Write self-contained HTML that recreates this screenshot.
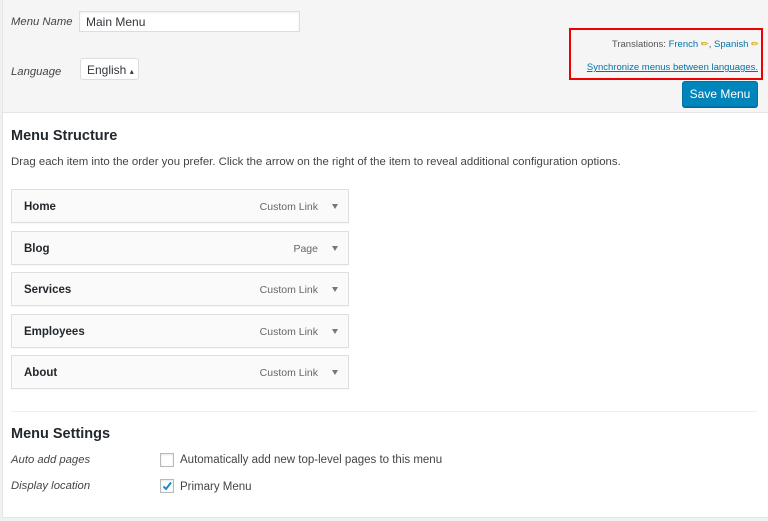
<!DOCTYPE html>
<html><head><style>
*{margin:0;padding:0;box-sizing:border-box}
body{width:768px;height:521px;background:#f1f1f1;font-family:"Liberation Sans",sans-serif;color:#23282d;position:relative;overflow:hidden;font-size:13px}
.frame{position:absolute;left:2px;top:0;width:768px;height:518px;background:#fff;border:1px solid #e5e5e5}
.head{position:absolute;left:3px;top:0;width:765px;height:113px;background:#f5f5f5;border-bottom:1px solid #e5e5e5}
.a{position:absolute;white-space:nowrap}
.lbl{font-style:italic;color:#444;font-size:11.3px}
.input{position:absolute;left:79px;top:11px;width:221px;height:21px;background:#fff;border:1px solid #ddd;box-shadow:inset 0 1px 2px rgba(0,0,0,.07);font-size:12px;padding:3px 6px;color:#32373c}
.sel{position:absolute;left:80px;top:58px;width:59px;height:22px;background:#fff;border:1px solid #ddd;border-radius:3px;font-size:12px;padding:4px 6px;color:#32373c;white-space:nowrap}
.red{position:absolute;left:569px;top:28px;width:194px;height:52px;border:2px solid #e00}
.btn{position:absolute;left:682px;top:81px;width:76px;height:26px;background:#0085ba;border:1px solid #0073aa;border-radius:3px;color:#fff;font-size:12px;text-align:center;line-height:24px;box-shadow:0 1px 0 #006799}
.item{position:absolute;left:11px;width:338px;height:34px;background:#fafafa;border:1px solid #dfdfdf;box-shadow:0 1px 1px rgba(0,0,0,.04)}
.item b{position:absolute;left:12px;top:11px;font-size:11.5px;color:#23282d}
.item span{position:absolute;right:30px;top:11px;font-size:10.5px;color:#666}
.item i{position:absolute;right:10px;top:14px;width:0;height:0;border-left:3.5px solid transparent;border-right:3.5px solid transparent;border-top:5px solid #777}
.cb{position:absolute;left:160px;width:14px;height:14px;border:1px solid #b4b9be;background:#fff;box-shadow:inset 0 1px 2px rgba(0,0,0,.1)}
a{color:#0073aa;text-decoration:none}
</style></head><body>
<div class="frame"></div>
<div class="head"></div>
<div class="a lbl" style="left:11px;top:16px">Menu Name</div>
<div class="input">Main Menu</div>
<div class="a lbl" style="left:11px;top:66px">Language</div>
<div class="sel">English <span style="font-size:8px">&#x25B4;</span></div>
<div class="red"></div>
<div class="a" style="right:9px;top:39px;font-size:9.5px;color:#555">Translations: <a>French</a> <span style="color:#c9a000">✏</span>, <a>Spanish</a> <span style="color:#c9a000">✏</span></div>
<div class="a" style="right:10px;top:62px;font-size:9.5px"><a style="text-decoration:underline">Synchronize menus between languages.</a></div>
<div class="btn">Save Menu</div>
<div class="a" style="left:11px;top:128px;font-size:14.5px;font-weight:bold;color:#23282d">Menu Structure</div>
<div class="a" style="left:11px;top:156px;font-size:11.4px;color:#444">Drag each item into the order you prefer. Click the arrow on the right of the item to reveal additional configuration options.</div>
<div class="item" style="top:189px"><b>Home</b><span>Custom Link</span><i></i></div>
<div class="item" style="top:231px"><b>Blog</b><span>Page</span><i></i></div>
<div class="item" style="top:272px"><b>Services</b><span>Custom Link</span><i></i></div>
<div class="item" style="top:314px"><b>Employees</b><span>Custom Link</span><i></i></div>
<div class="item" style="top:355px"><b>About</b><span>Custom Link</span><i></i></div>
<div class="a" style="left:11px;top:411px;width:746px;height:1px;background:#eee"></div>
<div class="a" style="left:11px;top:426px;font-size:14.5px;font-weight:bold;color:#23282d">Menu Settings</div>
<div class="a lbl" style="left:11px;top:454px">Auto add pages</div>
<div class="cb" style="top:453px"></div>
<div class="a" style="left:180px;top:454px;font-size:11.5px;color:#444">Automatically add new top-level pages to this menu</div>
<div class="a lbl" style="left:11px;top:480px">Display location</div>
<div class="cb" style="top:479px"><svg width="12" height="12" viewBox="0 0 12 12" style="position:absolute;left:0;top:0"><path d="M2.5 6.5 L5 9 L10 2.5" fill="none" stroke="#1e8cbe" stroke-width="2"/></svg></div>
<div class="a" style="left:180px;top:481px;font-size:11.5px;color:#444">Primary Menu</div>
</body></html>
